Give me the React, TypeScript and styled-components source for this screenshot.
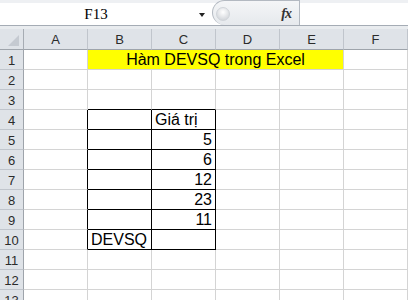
import React from "react";
import styled, { createGlobalStyle } from "styled-components";

const GlobalStyle = createGlobalStyle`
  html, body {
    margin: 0;
    padding: 0;
    background: #ffffff;
    overflow: hidden;
  }
`;

const COLS = ["A", "B", "C", "D", "E", "F"];
const GRID = "#d4d4d4";
const BLACK = "#000000";

type CellData = { text?: string; align?: "left" | "right" | "center" };

const values: Record<number, string> = { 5: "5", 6: "6", 7: "12", 8: "23", 9: "11" };

const inTable = (row: number, col: number) =>
  row >= 4 && row <= 10 && (col === 1 || col === 2);

export default function App() {
  const rows = Array.from({ length: 13 }, (_, i) => i + 1);

  const renderRow = (row: number) => {
    const cells: React.ReactNode[] = [];
    cells.push(
      <RowHeader key={`h${row}`}>{row}</RowHeader>
    );
    if (row === 1) {
      cells.push(<Cell key="a1" $right={GRID} $bottom={GRID} />);
      cells.push(
        <TitleCell key="title" $span={4}>
          Hàm DEVSQ trong Excel
        </TitleCell>
      );
      cells.push(<Cell key="f1" $right={GRID} $bottom={GRID} />);
      return cells;
    }
    COLS.forEach((_, col) => {
      let right = GRID;
      let bottom = GRID;
      if (inTable(row, col) || inTable(row, col + 1)) right = BLACK;
      if (inTable(row, col) || inTable(row + 1, col)) bottom = BLACK;
      let data: CellData = {};
      if (row === 4 && col === 2) data = { text: "Giá trị", align: "left" };
      if (values[row] && col === 2) data = { text: values[row], align: "right" };
      if (row === 10 && col === 1) data = { text: "DEVSQ", align: "left" };
      cells.push(
        <Cell key={`${row}-${col}`} $right={right} $bottom={bottom} $align={data.align}>
          {data.text}
        </Cell>
      );
    });
    return cells;
  };

  return (
    <>
      <GlobalStyle />
      <Window>
        <FormulaBar>
          <NameBox>
            <NameText>F13</NameText>
            <DropArrow />
          </NameBox>
          <Controls>
            <Knob />
            <Fx>fx</Fx>
          </Controls>
          <FormulaInput />
        </FormulaBar>
        <Spacer />
        <Sheet>
          <Corner>
            <CornerTriangle />
          </Corner>
          {COLS.map((c) => (
            <ColHeader key={c}>{c}</ColHeader>
          ))}
          {rows.map(renderRow)}
        </Sheet>
      </Window>
    </>
  );
}

const Window = styled.div`
  width: 408px;
  height: 300px;
  overflow: hidden;
  background: #ffffff;
  font-family: "Liberation Sans", Arial, sans-serif;
`;

const FormulaBar = styled.div`
  display: flex;
  height: 22px;
  border-top: 3px solid #eef0f3;
  border-bottom: 1px solid #a5acb5;
  background: #ffffff;
`;

const NameBox = styled.div`
  width: 212px;
  display: flex;
  align-items: center;
  position: relative;
`;

const NameText = styled.span`
  flex: 1;
  text-align: center;
  padding-right: 20px;
  font-family: "Liberation Serif", "Times New Roman", serif;
  font-size: 15px;
  color: #000;
  margin-top: 1px;
`;

const DropArrow = styled.span`
  position: absolute;
  right: 7px;
  top: 10px;
  width: 0;
  height: 0;
  border-left: 3.5px solid transparent;
  border-right: 3.5px solid transparent;
  border-top: 4px solid #222;
`;

const Controls = styled.div`
  width: 88px;
  margin-top: -3px;
  height: 25px;
  box-sizing: border-box;
  border: 1px solid #b3b9c1;
  border-right: 1px solid #b3b9c1;
  border-bottom: none;
  border-radius: 13px 0 0 13px;
  background: linear-gradient(#f4f5f7, #e6e9ed);
  position: relative;
  display: flex;
  align-items: center;
  justify-content: flex-end;
  padding-right: 8px;
`;

const Knob = styled.span`
  position: absolute;
  left: 3px;
  top: 6px;
  width: 12px;
  height: 12px;
  border-radius: 50%;
  background: radial-gradient(circle at 50% 35%, #ffffff, #c8ccd2);
  border: 1px solid #d0d4d9;
`;

const Fx = styled.span`
  font-family: "Liberation Serif", "Times New Roman", serif;
  font-style: italic;
  font-weight: bold;
  font-size: 14px;
  color: #333;
  letter-spacing: -1px;
  margin-top: 1px;
`;

const FormulaInput = styled.div`
  flex: 1;
  background: #ffffff;
`;

const Spacer = styled.div`
  height: 3px;
  background: #e9ecef;
`;

const Sheet = styled.div`
  display: grid;
  grid-template-columns: 24px repeat(6, 64px);
  grid-template-rows: 21px;
  grid-auto-rows: 20px;
`;

const Corner = styled.div`
  background: #dfe3e8;
  border-right: 1px solid #a6acb3;
  border-bottom: 1px solid #9ea4ab;
  box-sizing: border-box;
  position: relative;
`;

const CornerTriangle = styled.span`
  position: absolute;
  right: 4px;
  bottom: 3px;
  width: 0;
  height: 0;
  border-left: 11px solid transparent;
  border-bottom: 11px solid #c5cad1;
`;

const ColHeader = styled.div`
  background: #dfe3e8;
  border-right: 1px solid #c0c5cc;
  border-bottom: 1px solid #9ea4ab;
  box-sizing: border-box;
  display: flex;
  align-items: center;
  justify-content: center;
  font-size: 13px;
  color: #2b2b2b;
  padding-top: 1px;
`;

const RowHeader = styled.div`
  background: #dfe3e8;
  border-right: 1px solid #9ea4ab;
  border-bottom: 1px solid #c0c5cc;
  box-sizing: border-box;
  display: flex;
  align-items: center;
  justify-content: center;
  font-size: 13px;
  color: #2b2b2b;
  padding-top: 1px;
`;

const Cell = styled.div<{ $right: string; $bottom: string; $align?: string }>`
  box-sizing: border-box;
  border-right: 1px solid ${(p) => p.$right};
  border-bottom: 1px solid ${(p) => p.$bottom};
  display: flex;
  align-items: flex-end;
  justify-content: ${(p) => (p.$align === "right" ? "flex-end" : "flex-start")};
  padding: 0 3px 0 3px;
  font-size: 16px;
  line-height: 19px;
  color: #000;
  white-space: nowrap;
  overflow: hidden;
`;

const TitleCell = styled.div<{ $span: number }>`
  grid-column: span ${(p) => p.$span};
  box-sizing: border-box;
  background: #ffff00;
  border-bottom: 1px solid ${GRID};
  border-right: 1px solid ${GRID};
  display: flex;
  align-items: flex-end;
  justify-content: center;
  font-size: 16px;
  line-height: 19px;
  color: #000;
`;
